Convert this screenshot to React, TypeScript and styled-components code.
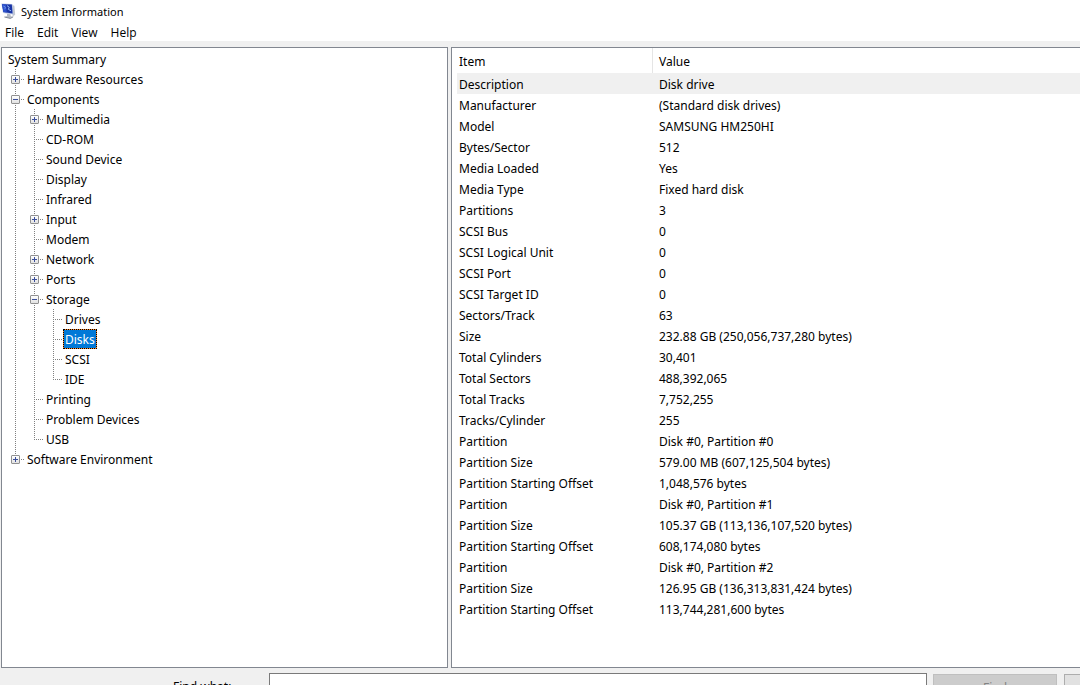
import React from 'react';
import styled, { createGlobalStyle, css } from 'styled-components';

const GlobalStyle = createGlobalStyle`
  * { box-sizing: border-box; }
  body {
    margin: 0;
    background: #f0f0f0;
    color: #000;
    font-family: 'Noto Sans', 'Open Sans', sans-serif;
    font-size: 12px;
    line-height: 20px;
    overflow: hidden;
  }
  button, input { font: inherit; color: inherit; }
`;

const Window = styled.div`
  display: flex;
  flex-direction: column;
  height: 100vh;
`;

const TitleBar = styled.header`
  display: flex;
  align-items: center;
  gap: 5px;
  height: 23px;
  background: #fff;
`;

const Title = styled.h1`
  margin: 0;
  font-size: 11px;
  font-weight: 400;
`;

const MenuBar = styled.nav`
  display: flex;
  align-items: flex-start;
  height: 18px;
  background: #fff;
`;

const MenuButton = styled.button`
  padding: 0 8px 0 5px;
  border: 0;
  background: none;
  font-family: 'Open Sans', sans-serif;
`;

const Panes = styled.main`
  display: flex;
  flex: 1;
  min-height: 0;
  gap: 3px;
  padding: 6px 0 0 1px;
`;

const Pane = styled.section`
  border: 1px solid #828790;
  background: #fff;
  overflow: hidden;
`;

const TreePane = styled(Pane)`
  flex: 0 0 447px;
  padding: 1px 4px;
`;

const DetailPane = styled(Pane)`
  flex: 1;
  padding-left: 5px;
  border-right: 0;
`;

const Branch = styled.ul`
  margin: 0;
  padding: 0;
  list-style: none;
`;

const TreeRow = styled.div`
  display: flex;
  height: 20px;
`;

const dotsDown = 'repeating-linear-gradient(180deg, #808080 0 1px, transparent 1px 2px)';
const dotsAcross = 'repeating-linear-gradient(90deg, #808080 0 1px, transparent 1px 2px)';

type GuideKind = 'blank' | 'through' | 'tee' | 'end';

const guideLines = {
  blank: css``,
  through: css`
    background: ${dotsDown} 9px 0 / 1px 20px no-repeat;
  `,
  tee: css`
    background:
      ${dotsDown} 9px 0 / 1px 20px no-repeat,
      ${dotsAcross} 9px 10px / 9px 1px no-repeat;
  `,
  end: css`
    background:
      ${dotsDown} 9px 0 / 1px 10px no-repeat,
      ${dotsAcross} 9px 10px / 9px 1px no-repeat;
  `,
};

const Guide = styled.span<{ $kind: GuideKind }>`
  flex: 0 0 19px;
  display: flex;
  align-items: flex-start;
  justify-content: center;
  padding-top: 6px;
  ${({ $kind }) => guideLines[$kind]}
`;

const Expander = styled.button`
  display: flex;
  width: 9px;
  height: 9px;
  padding: 1px;
  border: 1px solid #919191;
  border-radius: 1px;
  background: linear-gradient(#fff, #e2e2e2);
`;

const TreeLabel = styled.button<{ $selected: boolean }>`
  padding: 2px 1px 0;
  border: 1px solid transparent;
  background: none;
  line-height: 16px;
  white-space: nowrap;
  ${({ $selected }) =>
    $selected &&
    css`
      border: 1px dotted #000;
      background:
        linear-gradient(#0078d7, #0078d7) padding-box,
        linear-gradient(#ff8728, #ff8728) border-box;
      color: #fff;
    `}
`;

const Details = styled.table`
  width: 100%;
  table-layout: fixed;
  border-spacing: 0;
`;

const ItemColumn = styled.col`
  width: 196px;
`;

const HeadCell = styled.th`
  height: 25px;
  padding: 2px 2px 0;
  font-weight: 400;
  text-align: left;

  &:first-child {
    border-right: 1px solid #e5e5e5;
  }

  & + & {
    padding-left: 6px;
  }
`;

const DetailRow = styled.tr<{ $selected: boolean }>`
  height: 21px;
  background: ${({ $selected }) => ($selected ? '#f0f0f0' : 'transparent')};
`;

const Cell = styled.td`
  padding: 3px 2px 0;
  line-height: 18px;
  white-space: nowrap;

  & + & {
    padding-left: 6px;
  }
`;

const FindBar = styled.form`
  display: flex;
  flex: 0 0 17px;
  align-items: flex-start;
  padding: 5px 0 0 173px;
  overflow: hidden;
`;

const FindLabel = styled.label`
  flex: 0 0 96px;
  padding-top: 4px;
`;

const FindInput = styled.input`
  flex: 1;
  min-width: 0;
  height: 24px;
  margin-right: 6px;
  padding: 0 4px;
  border: 1px solid #7a7a7a;
  border-radius: 0;
  background: #fff;
`;

const FindButton = styled.button`
  flex: 0 0 124px;
  height: 26px;
  margin: 1px 7px 0 0;
  padding: 2px 0 0;
  border: 1px solid #adadad;
  background: #e1e1e1;

  &:disabled {
    border-color: #bfbfbf;
    background: #ccc;
    color: #838383;
  }
`;

const CloseButton = styled(FindButton)`
  flex-basis: 16px;
  margin-right: 0;
  border-right: 0;
`;

type Node = { label: string; children?: Node[]; expandable?: boolean };

const tree: Node[] = [
  { label: 'Hardware Resources', expandable: true },
  {
    label: 'Components',
    expandable: true,
    children: [
      { label: 'Multimedia', expandable: true },
      { label: 'CD-ROM' },
      { label: 'Sound Device' },
      { label: 'Display' },
      { label: 'Infrared' },
      { label: 'Input', expandable: true },
      { label: 'Modem' },
      { label: 'Network', expandable: true },
      { label: 'Ports', expandable: true },
      {
        label: 'Storage',
        expandable: true,
        children: [{ label: 'Drives' }, { label: 'Disks' }, { label: 'SCSI' }, { label: 'IDE' }],
      },
      { label: 'Printing' },
      { label: 'Problem Devices' },
      { label: 'USB' },
    ],
  },
  { label: 'Software Environment', expandable: true },
];

const details: [string, string][] = [
  ['Description', 'Disk drive'],
  ['Manufacturer', '(Standard disk drives)'],
  ['Model', 'SAMSUNG HM250HI'],
  ['Bytes/Sector', '512'],
  ['Media Loaded', 'Yes'],
  ['Media Type', 'Fixed hard disk'],
  ['Partitions', '3'],
  ['SCSI Bus', '0'],
  ['SCSI Logical Unit', '0'],
  ['SCSI Port', '0'],
  ['SCSI Target ID', '0'],
  ['Sectors/Track', '63'],
  ['Size', '232.88 GB (250,056,737,280 bytes)'],
  ['Total Cylinders', '30,401'],
  ['Total Sectors', '488,392,065'],
  ['Total Tracks', '7,752,255'],
  ['Tracks/Cylinder', '255'],
  ['Partition', 'Disk #0, Partition #0'],
  ['Partition Size', '579.00 MB (607,125,504 bytes)'],
  ['Partition Starting Offset', '1,048,576 bytes'],
  ['Partition', 'Disk #0, Partition #1'],
  ['Partition Size', '105.37 GB (113,136,107,520 bytes)'],
  ['Partition Starting Offset', '608,174,080 bytes'],
  ['Partition', 'Disk #0, Partition #2'],
  ['Partition Size', '126.95 GB (136,313,831,424 bytes)'],
  ['Partition Starting Offset', '113,744,281,600 bytes'],
];

const ComputerIcon = () => (
  <svg width="16" height="17" viewBox="0 0 16 17" aria-hidden="true">
    <path d="M12 2l2.4.8.8 9-2.6 1.6z" fill="#c3c8d2" />
    <path d="M1.4.6L12.4 1l1 10.4L3 10z" fill="#b9c6e4" />
    <path d="M2 1.2l9.8.4.8 8.8L3.4 9z" fill="#1a35a6" />
    <path d="M2 1.2l4 .2.8 8-3.4-.5z" fill="#2a50cc" />
    <path d="M7 2.6l2.2 1.6-.8 2.2 2.6 1.4" stroke="#8fb4f5" fill="none" />
    <path d="M3.4 3l2 1.2-.6 2" stroke="#6f94ea" fill="none" />
    <path d="M7 10.8l3.4.4.4 2 2.2.6-2.6 1.6-6-1.4 2.6-1z" fill="#b4bac5" />
    <path d="M4.4 14l6 1.4 2.8-1.6" stroke="#858c99" fill="none" />
  </svg>
);

const ExpanderMark = ({ open }: { open: boolean }) => (
  <svg width="5" height="5" viewBox="0 0 5 5" aria-hidden="true">
    <path d={open ? 'M0 2h5v1H0z' : 'M0 2h5v1H0zM2 0h1v5H2z'} fill="#3b4f9a" />
  </svg>
);

const TreeNodes = ({ nodes, guides }: { nodes: Node[]; guides: GuideKind[] }) => (
  <Branch role={guides.length ? 'group' : 'tree'}>
    {nodes.map((node, index) => {
      const last = index === nodes.length - 1;
      const open = Boolean(node.children);
      const selected = node.label === 'Disks';
      return (
        <li key={node.label} role="treeitem" aria-selected={selected}>
          <TreeRow>
            {guides.map((kind, depth) => (
              <Guide key={depth} $kind={kind} />
            ))}
            <Guide $kind={last ? 'end' : 'tee'}>
              {node.expandable && (
                <Expander type="button" aria-label={`Toggle ${node.label}`} aria-expanded={open}>
                  <ExpanderMark open={open} />
                </Expander>
              )}
            </Guide>
            <TreeLabel type="button" $selected={selected}>
              {node.label}
            </TreeLabel>
          </TreeRow>
          {node.children && (
            <TreeNodes nodes={node.children} guides={[...guides, last ? 'blank' : 'through']} />
          )}
        </li>
      );
    })}
  </Branch>
);

export default function App() {
  return (
    <Window>
      <GlobalStyle />
      <TitleBar>
        <ComputerIcon />
        <Title>System Information</Title>
      </TitleBar>
      <MenuBar aria-label="Main menu">
        {['File', 'Edit', 'View', 'Help'].map((name) => (
          <MenuButton key={name} type="button">
            {name}
          </MenuButton>
        ))}
      </MenuBar>
      <Panes>
        <TreePane aria-label="Categories">
          <TreeRow>
            <TreeLabel type="button" $selected={false}>
              System Summary
            </TreeLabel>
          </TreeRow>
          <TreeNodes nodes={tree} guides={[]} />
        </TreePane>
        <DetailPane aria-label="Details">
          <Details>
            <colgroup>
              <ItemColumn />
              <col />
            </colgroup>
            <thead>
              <tr>
                <HeadCell scope="col">Item</HeadCell>
                <HeadCell scope="col">Value</HeadCell>
              </tr>
            </thead>
            <tbody>
              {details.map(([item, value], index) => (
                <DetailRow key={index} $selected={index === 0}>
                  <Cell>{item}</Cell>
                  <Cell>{value}</Cell>
                </DetailRow>
              ))}
            </tbody>
          </Details>
        </DetailPane>
      </Panes>
      <FindBar onSubmit={(event: React.FormEvent) => event.preventDefault()}>
        <FindLabel htmlFor="find-what">Find what:</FindLabel>
        <FindInput id="find-what" type="text" />
        <FindButton type="submit" disabled>
          Find
        </FindButton>
        <CloseButton type="button" aria-label="Close Find" />
      </FindBar>
    </Window>
  );
}
